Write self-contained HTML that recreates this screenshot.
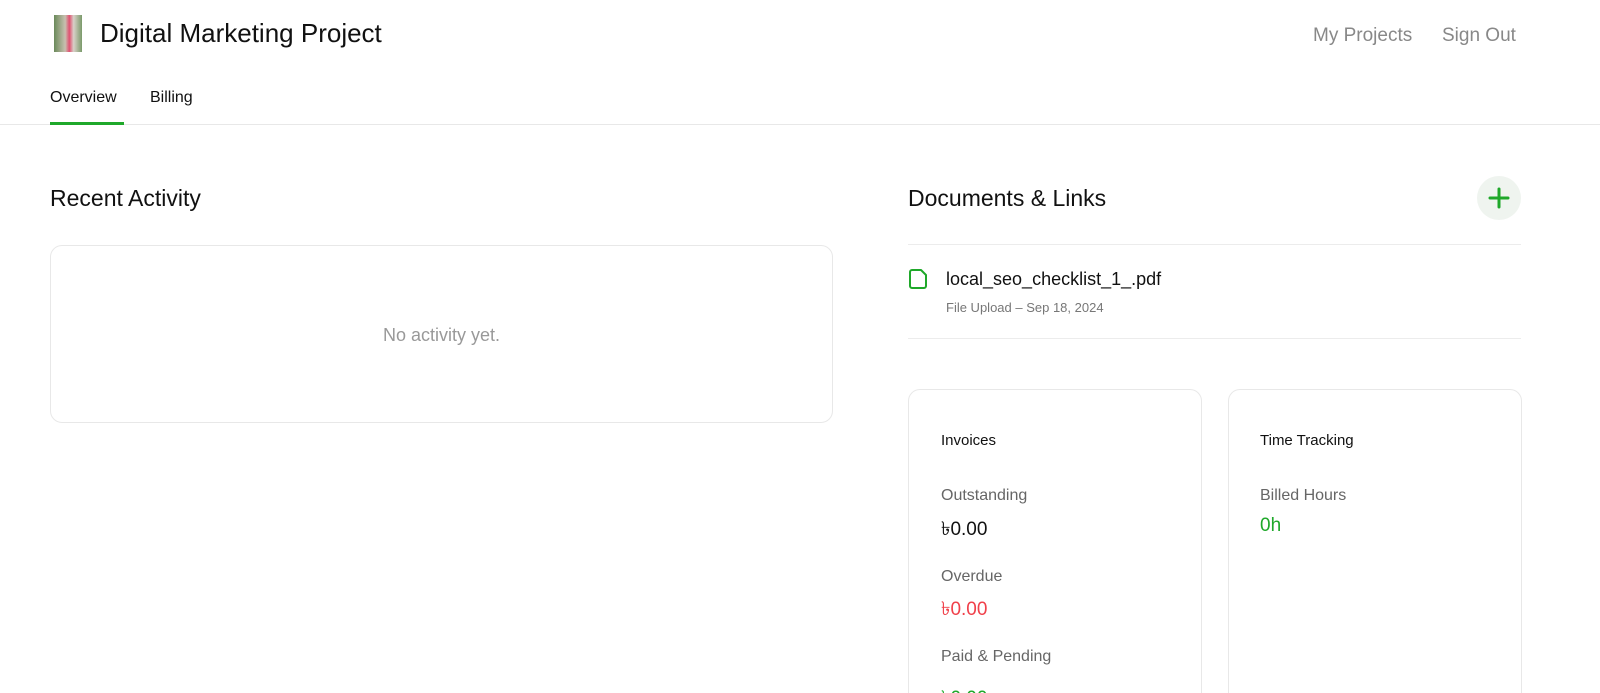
<!DOCTYPE html>
<html><head><meta charset="utf-8"><style>
*{margin:0;padding:0;box-sizing:border-box}
html,body{width:1600px;height:693px;overflow:hidden;background:#fff}
body{font-family:"Liberation Sans","DejaVu Sans",sans-serif;color:#111}
#w{position:relative;width:1600px;height:693px;overflow:hidden}
.a{position:absolute;white-space:nowrap}
</style></head><body><div id="w">
<div class="a" style="left:54px;top:15px;width:28px;height:37px;background:linear-gradient(90deg,#6a8a5a,#c8c0b0 40%,#e05070 55%,#d8d0c8 70%,#7a9a6a)"></div>
<div class="a" style="left:100px;top:18px;font-size:26px;font-weight:500">Digital Marketing Project</div>
<div class="a" style="left:1313px;top:25px;font-size:19px;color:#888">My Projects</div>
<div class="a" style="left:1442px;top:25px;font-size:19px;color:#888">Sign Out</div>
<div class="a" style="left:50px;top:89px;font-size:16px">Overview</div>
<div class="a" style="left:150px;top:89px;font-size:16px">Billing</div>
<div class="a" style="left:0;top:124px;width:1600px;height:1px;background:#e8e8e8"></div>
<div class="a" style="left:50px;top:122px;width:74px;height:3px;background:#1fa82a"></div>

<div class="a" style="left:50px;top:185px;font-size:23px;font-weight:500">Recent Activity</div>
<div class="a" style="left:50px;top:245px;width:783px;height:178px;border:1px solid #e8e8e8;border-radius:12px"></div>
<div class="a" style="left:50px;top:325px;width:783px;text-align:center;font-size:18px;color:#999">No activity yet.</div>

<div class="a" style="left:908px;top:185px;font-size:23px;font-weight:500">Documents &amp; Links</div>
<div class="a" style="left:1477px;top:176px;width:44px;height:44px;border-radius:50%;background:#eff4ef"></div>
<svg class="a" style="left:1488px;top:187px" width="22" height="22" viewBox="0 0 22 22"><path d="M11 2v18M2 11h18" stroke="#1fa82a" stroke-width="3" stroke-linecap="round"/></svg>
<div class="a" style="left:908px;top:244px;width:613px;height:1px;background:#ececec"></div>
<svg class="a" style="left:909px;top:268px" width="20" height="22" viewBox="0 0 20 22"><path d="M3 2h9l5 5v11a2 2 0 0 1-2 2H3a2 2 0 0 1-2-2V4a2 2 0 0 1 2-2z" fill="none" stroke="#1fa82a" stroke-width="2" stroke-linejoin="round"/></svg>
<div class="a" style="left:946px;top:269px;font-size:18px">local_seo_checklist_1_.pdf</div>
<div class="a" style="left:946px;top:300px;font-size:13px;color:#777">File Upload – Sep 18, 2024</div>
<div class="a" style="left:908px;top:338px;width:613px;height:1px;background:#ececec"></div>

<div class="a" style="left:908px;top:389px;width:294px;height:360px;border:1px solid #e8e8e8;border-radius:12px"></div>
<div class="a" style="left:1228px;top:389px;width:294px;height:360px;border:1px solid #e8e8e8;border-radius:12px"></div>
<div class="a" style="left:941px;top:432px;font-size:15px;font-weight:500">Invoices</div>
<div class="a" style="left:941px;top:487px;font-size:16px;color:#666">Outstanding</div>
<div class="a" style="left:941px;top:515px;font-size:19px">৳0.00</div>
<div class="a" style="left:941px;top:568px;font-size:16px;color:#666">Overdue</div>
<div class="a" style="left:941px;top:595px;font-size:19px;color:#f0404a">৳0.00</div>
<div class="a" style="left:941px;top:648px;font-size:16px;color:#666">Paid &amp; Pending</div>
<div class="a" style="left:941px;top:684px;font-size:19px;color:#1fa82a">৳0.00</div>
<div class="a" style="left:1260px;top:432px;font-size:15px;font-weight:500">Time Tracking</div>
<div class="a" style="left:1260px;top:487px;font-size:16px;color:#666">Billed Hours</div>
<div class="a" style="left:1260px;top:515px;font-size:19px;color:#1fa82a">0h</div>
</div></body></html>
